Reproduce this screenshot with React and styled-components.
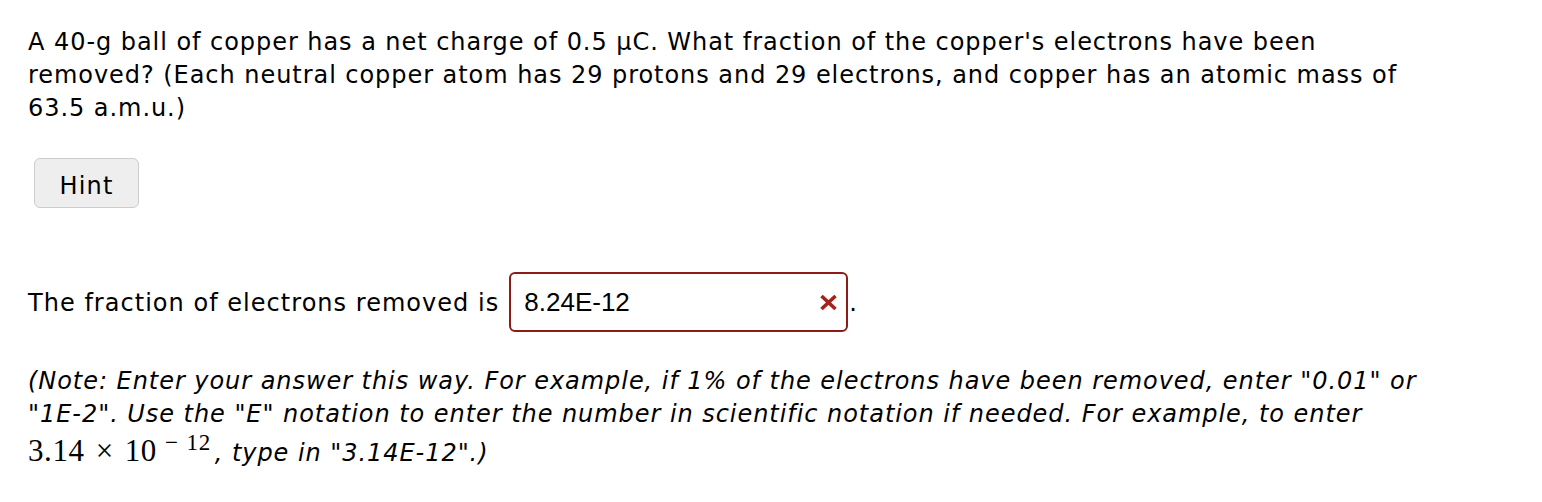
import styled, { createGlobalStyle } from 'styled-components'

const GlobalStyle = createGlobalStyle`
  body {
    margin: 0;
    background: #fff;
    color: #000;
    font-family: "DejaVu Sans", Verdana, sans-serif;
  }
`

const Page = styled.div`
  padding: 26px 28px;
  font-size: 24px;
  line-height: 33px;
  letter-spacing: 0.95px;
`

const Paragraph = styled.p`
  margin: 0;
  white-space: nowrap;
`

const HintButton = styled.button`
  display: block;
  margin: 33px 0 0 6px;
  width: 105px;
  height: 50px;
  padding: 5px 0 0;
  background: #eeeeee;
  border: 1px solid #cccccc;
  border-radius: 6px;
  font-family: inherit;
  font-size: 24px;
  letter-spacing: 1.2px;
  color: #000;
`

const AnswerRow = styled.div`
  display: flex;
  align-items: center;
  margin-top: 64px;
  white-space: pre;
`

const AnswerLabel = styled.span`
  padding-top: 3px;
  letter-spacing: 1.03px;
`

const AnswerBox = styled.div`
  display: flex;
  align-items: center;
  justify-content: space-between;
  box-sizing: border-box;
  width: 339px;
  height: 60px;
  margin-left: 10px;
  margin-right: 1px;
  padding: 0 8px 0 13px;
  border: 2px solid #8e1c16;
  border-radius: 6px;
  font-family: "Liberation Sans", Arial, sans-serif;
  font-size: 26px;
  letter-spacing: 0;
`

const Note = styled.p`
  margin: 33px 0 0;
  font-style: italic;
  white-space: nowrap;
`

const MathText = styled.span`
  font-family: "Liberation Serif", "DejaVu Serif", serif;
  font-style: normal;
  font-size: 31px;
  letter-spacing: 0.6px;
  line-height: 40px;
`

const Operator = styled.span`
  margin: 0 ${(p) => p.$space}px;
`

const Sup = styled.sup`
  font-size: 23px;
  vertical-align: 11px;
  line-height: 0;
  margin-left: 8px;
  margin-right: 4px;
`

const CrossMark = () => (
  <svg width="19" height="17" viewBox="0 0 19 17">
    <path d="M2.5 2 L16.5 15 M16.5 2 L2.5 15" stroke="#a3221b" strokeWidth="3.6" strokeLinecap="butt" />
  </svg>
)

const App = () => {
  return (
    <Page>
      <GlobalStyle />
      <Paragraph>
        A 40-g ball of copper has a net charge of 0.5 μC. What fraction of the copper's electrons have been
        <br />
        removed? (Each neutral copper atom has 29 protons and 29 electrons, and copper has an atomic mass of
        <br />
        63.5 a.m.u.)
      </Paragraph>
      <HintButton>Hint</HintButton>
      <AnswerRow>
        <AnswerLabel>The fraction of electrons removed is</AnswerLabel>
        <AnswerBox>
          <span>8.24E-12</span>
          <CrossMark />
        </AnswerBox>
        <AnswerLabel>.</AnswerLabel>
      </AnswerRow>
      <Note>
        (Note: Enter your answer this way. For example, if 1% of the electrons have been removed, enter "0.01" or
        <br />
        "1E-2". Use the "E" notation to enter the number in scientific notation if needed. For example, to enter
        <br />
        <MathText>
          3.14<Operator $space={11}>×</Operator>10
          <Sup>
            −<Operator $space={4}></Operator>12
          </Sup>
        </MathText>
        , type in "3.14E-12".)
      </Note>
    </Page>
  )
}

export default App
